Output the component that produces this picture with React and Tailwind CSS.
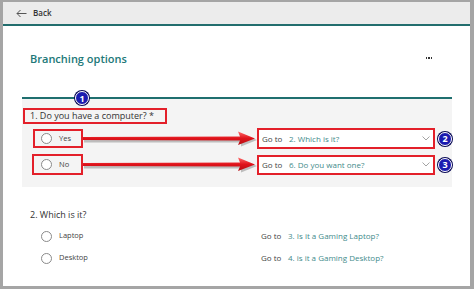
const Badge = ({ n }) => (
  <div className="w-[14px] h-[14px] rounded-full bg-[#1b1bb0] border-[1.5px] border-white ring-1 ring-[#0b0b55] text-white text-[9px] font-bold leading-none flex items-center justify-center">
    {n}
  </div>
);

const Radio = () => (
  <div className="w-[11px] h-[11px] rounded-full border border-[#8a8a8a] bg-white shrink-0" />
);

const Arrow = () => (
  <svg width="174" height="21" viewBox="0 0 174 21" className="shrink-0">
    <defs>
      <linearGradient id="shaft" x1="0" y1="0" x2="0" y2="1">
        <stop offset="0" stopColor="#ff6b6b" />
        <stop offset="0.5" stopColor="#e0131b" />
        <stop offset="1" stopColor="#b50d12" />
      </linearGradient>
    </defs>
    <path d="M1 11.5 L158 10.5 L158 5.5 L174 12 L158 18.5 L158 14.5 L1 14.5 Z" fill="#7a7a7a" opacity="0.45" />
    <path d="M0 9 L157 8.5 L155 3.5 L172 10.5 L155 17 L157 12.5 L0 12 Z" fill="url(#shaft)" />
  </svg>
);

const Chevron = () => (
  <svg width="8" height="5" viewBox="0 0 8 5" fill="none" stroke="#9a9a9a" strokeWidth="0.9">
    <path d="M0.5 0.5 L4 4 L7.5 0.5" />
  </svg>
);

const GoToSelect = ({ value, h }) => (
  <div className={`w-[178px] ${h} border-2 border-[#e3202a] bg-white flex items-center shrink-0`}>
    <span className="w-[30px] pl-[3px] text-[8px] text-[#444]">Go to</span>
    <span className="flex-1 text-[8px] text-[#3f8b8b]">{value}</span>
    <span className="pr-[3px]">
      <Chevron />
    </span>
  </div>
);

const App = () => {
  return (
    <div
      className="w-[474px] h-[289px] bg-[#a5a5a5] pt-[2px] pl-[3px] pr-[4px] pb-[3px]"
      style={{ fontFamily: '"Open Sans", "Noto Sans", sans-serif' }}
    >
      <div className="h-full bg-white flex flex-col">
        <div className="h-[22px] bg-[#ececec] flex items-center pl-[13px] shrink-0">
          <svg width="11" height="9" viewBox="0 0 11 9" fill="none" stroke="#555" strokeWidth="1">
            <path d="M10.5 4.5 H1 M4.5 1 L1 4.5 L4.5 8" />
          </svg>
          <span className="ml-[6px] text-[8px] font-semibold text-[#333]">Back</span>
        </div>
        <div className="h-[2px] bg-[#236e6e] shrink-0" />

        <div className="flex-1 pl-[19px] pr-[18px]">
          <div className="mt-[25px] h-[16px] flex items-center justify-between pl-[8px] pr-[20px]">
            <h1 className="text-[11px] font-semibold text-[#217878]">Branching options</h1>
            <div className="flex gap-[1px] mb-[2px]">
              <span className="w-[1.5px] h-[1.5px] bg-[#333]" />
              <span className="w-[1.5px] h-[1.5px] bg-[#333]" />
              <span className="w-[1.5px] h-[1.5px] bg-[#333]" />
            </div>
          </div>

          <div className="relative mt-[30px] border-t-2 border-[#1f6f6f] bg-[#f4f4f4] h-[90px]">
            <div className="absolute left-[53px] top-[-8px]">
              <Badge n="1" />
            </div>

            <div className="mt-[9px] ml-[1px] w-[144px] h-[16px] border-2 border-[#e3202a] flex items-center pl-[5px]">
              <span className="text-[9px] text-[#333]">1. Do you have a computer? *</span>
            </div>

            <div className="mt-[4px] h-[21px] flex items-center pl-[11px]">
              <div className="w-[50px] h-[19px] border-2 border-[#e3202a] flex items-center pl-[6px] shrink-0">
                <Radio />
                <span className="ml-[7px] text-[7.5px] text-[#444]">Yes</span>
              </div>
              <Arrow />
              <GoToSelect value="2. Which is it?" h="h-[21px]" />
              <div className="ml-[3px]">
                <Badge n="2" />
              </div>
            </div>

            <div className="mt-[5px] h-[21px] flex items-center pl-[10px]">
              <div className="w-[51px] h-[21px] border-2 border-[#e3202a] flex items-center pl-[7px] shrink-0">
                <Radio />
                <span className="ml-[7px] text-[7.5px] text-[#444]">No</span>
              </div>
              <Arrow />
              <GoToSelect value="6. Do you want one?" h="h-[20px]" />
              <div className="ml-[3px]">
                <Badge n="3" />
              </div>
            </div>
          </div>

          <div className="mt-[21px] h-[14px] flex items-center pl-[8px]">
            <span className="text-[9px] text-[#333]">2. Which is it?</span>
          </div>

          <div className="mt-[7px] h-[14px] flex items-center">
            <div className="w-[239px] flex items-center pl-[19px] shrink-0">
              <Radio />
              <span className="ml-[7px] text-[7.5px] text-[#444]">Laptop</span>
            </div>
            <span className="w-[27px] text-[8px] text-[#444]">Go to</span>
            <span className="text-[8px] text-[#3f8b8b]">3. Is it a Gaming Laptop?</span>
          </div>

          <div className="mt-[8px] h-[14px] flex items-center">
            <div className="w-[239px] flex items-center pl-[19px] shrink-0">
              <Radio />
              <span className="ml-[7px] text-[7.5px] text-[#444]">Desktop</span>
            </div>
            <span className="w-[27px] text-[8px] text-[#444]">Go to</span>
            <span className="text-[8px] text-[#3f8b8b]">4. is it a Gaming Desktop?</span>
          </div>
        </div>
      </div>
    </div>
  );
};

export default App;
